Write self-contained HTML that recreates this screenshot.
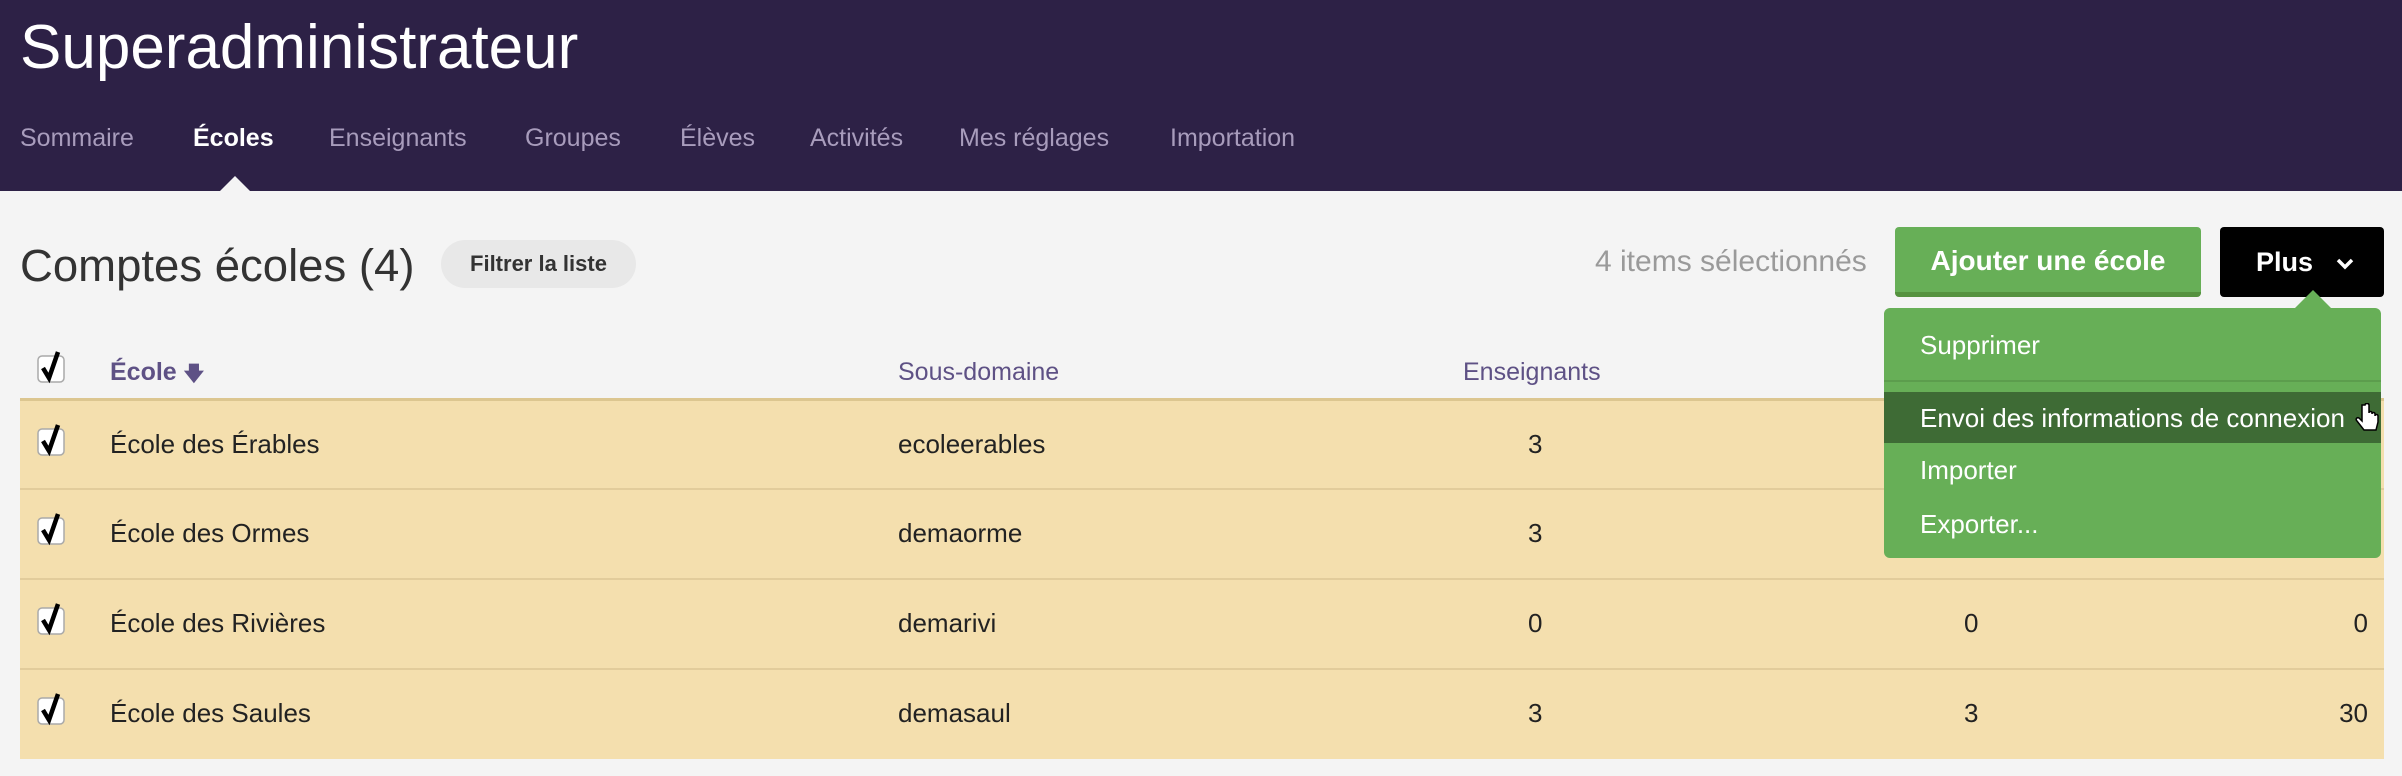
<!DOCTYPE html>
<html><head><meta charset="utf-8"><style>
*{margin:0;padding:0;box-sizing:border-box}
body{width:2402px;height:776px;background:#f4f4f4;font-family:"Liberation Sans",Arial,sans-serif;position:relative;overflow:hidden;color:#222}
.hdr{position:absolute;left:0;top:0;width:2402px;height:191px;background:#2d2146}
.title{position:absolute;left:20px;top:12px;font-size:62px;color:#fff;line-height:72px}
.nav{position:absolute;top:121px;font-size:25px;color:#a89cbc;line-height:34px}
.nav.on{color:#fff;font-weight:bold}
.tri{position:absolute;left:220px;top:176px;width:0;height:0;border-left:15px solid transparent;border-right:15px solid transparent;border-bottom:15px solid #f4f4f4}
.h1{position:absolute;left:20px;top:239px;font-size:45.5px;color:#333;line-height:54px}
.pill{position:absolute;left:441px;top:240px;width:195px;height:48px;border-radius:24px;background:#e8e8e8;font-weight:bold;font-size:22px;line-height:48px;text-align:center;color:#333}
.sel{position:absolute;left:1595px;top:244px;font-size:30px;color:#9a9a9a;line-height:36px}
.gb{position:absolute;left:1895px;top:227px;width:306px;height:70px;background:#67af57;border-bottom:5px solid #55923f;border-radius:4px;color:#fff;font-weight:bold;font-size:28px;text-align:center;line-height:68px}
.pb{position:absolute;left:2220px;top:227px;width:164px;height:70px;background:#000;border-radius:4px;color:#fff;font-weight:bold;font-size:27px;line-height:70px;padding-left:36px}
.dd{position:absolute;left:1884px;top:308px;width:497px;height:250px;background:#67af57;border-radius:6px}
.ddtri{position:absolute;left:2295px;top:290px;border-left:18px solid transparent;border-right:18px solid transparent;border-bottom:18px solid #67af57;width:0;height:0}
.di{position:absolute;left:36px;font-size:26px;color:#fff;line-height:34px;white-space:nowrap}
.th{position:absolute;top:356px;font-size:25px;color:#5e5185;line-height:32px}
.row{position:absolute;left:20px;width:2364px;height:90px;background:#f4dfae;border-top:2px solid #e2cc9b}
.c{position:absolute;font-size:26px;line-height:34px;top:26px;color:#222}
.cb{position:absolute;left:16px;width:34px;height:34px}
</style></head><body>
<div class="hdr">
<div class="title">Superadministrateur</div>
<div class="nav" style="left:20px">Sommaire</div>
<div class="nav on" style="left:193px">Écoles</div>
<div class="nav" style="left:329px">Enseignants</div>
<div class="nav" style="left:525px">Groupes</div>
<div class="nav" style="left:680px">Élèves</div>
<div class="nav" style="left:810px">Activités</div>
<div class="nav" style="left:959px">Mes réglages</div>
<div class="nav" style="left:1170px">Importation</div>
<div class="tri"></div>
</div>
<div class="h1">Comptes écoles (4)</div>
<div class="pill">Filtrer la liste</div>
<div class="sel">4 items sélectionnés</div>
<div class="gb">Ajouter une école</div>
<div class="pb">Plus <svg width="20" height="14" viewBox="0 0 20 14" style="margin-left:14px;vertical-align:middle"><path d="M3 3l7 7 7-7" stroke="#fff" stroke-width="3.5" fill="none"/></svg></div>

<svg class="cb" style="position:absolute;left:36px;top:350px" viewBox="0 0 34 34"><rect x="2" y="6" width="26" height="26" rx="4" fill="#fff" stroke="#aaa" stroke-width="1.5"/><path d="M7 18l6 10 9-26" stroke="#000" stroke-width="4.5" fill="none"/></svg>
<div class="th" style="left:110px;font-weight:bold">École <span style="font-size:20px">&#129095;</span></div>
<div class="th" style="left:898px">Sous-domaine</div>
<div class="th" style="left:1463px">Enseignants</div>

<div class="row" style="top:398px;border-top:3px solid #dcc690">
<svg class="cb" style="top:22px" viewBox="0 0 34 34"><rect x="2" y="6" width="26" height="26" rx="4" fill="#fff" stroke="#aaa" stroke-width="1.5"/><path d="M7 18l6 10 9-26" stroke="#000" stroke-width="4.5" fill="none"/></svg>
<div class="c" style="left:90px">École des Érables</div><div class="c" style="left:878px">ecoleerables</div><div class="c" style="left:1508px">3</div></div>
<div class="row" style="top:488px">
<svg class="cb" style="top:22px" viewBox="0 0 34 34"><rect x="2" y="6" width="26" height="26" rx="4" fill="#fff" stroke="#aaa" stroke-width="1.5"/><path d="M7 18l6 10 9-26" stroke="#000" stroke-width="4.5" fill="none"/></svg>
<div class="c" style="left:90px">École des Ormes</div><div class="c" style="left:878px">demaorme</div><div class="c" style="left:1508px">3</div></div>
<div class="row" style="top:578px">
<svg class="cb" style="top:22px" viewBox="0 0 34 34"><rect x="2" y="6" width="26" height="26" rx="4" fill="#fff" stroke="#aaa" stroke-width="1.5"/><path d="M7 18l6 10 9-26" stroke="#000" stroke-width="4.5" fill="none"/></svg>
<div class="c" style="left:90px">École des Rivières</div><div class="c" style="left:878px">demarivi</div><div class="c" style="left:1508px">0</div><div class="c" style="left:1944px">0</div><div class="c" style="right:16px">0</div></div>
<div class="row" style="top:668px;height:91px">
<svg class="cb" style="top:22px" viewBox="0 0 34 34"><rect x="2" y="6" width="26" height="26" rx="4" fill="#fff" stroke="#aaa" stroke-width="1.5"/><path d="M7 18l6 10 9-26" stroke="#000" stroke-width="4.5" fill="none"/></svg>
<div class="c" style="left:90px">École des Saules</div><div class="c" style="left:878px">demasaul</div><div class="c" style="left:1508px">3</div><div class="c" style="left:1944px">3</div><div class="c" style="right:16px">30</div></div>

<div class="ddtri"></div>
<div class="dd">
<div class="di" style="top:20px">Supprimer</div>
<div style="position:absolute;left:0;top:72px;width:497px;height:2px;background:#5c9d4d"></div>
<div style="position:absolute;left:0;top:84px;width:497px;height:51px;background:#3e6b35"></div>
<div class="di" style="top:93px">Envoi des informations de connexion</div>
<div class="di" style="top:145px">Importer</div>
<div class="di" style="top:199px">Exporter...</div>
<svg style="position:absolute;left:470px;top:95px" width="26" height="34" viewBox="0 0 26 34"><path d="M8 2v16l-3-3c-2-1-4 1-2 3l7 9h12l2-8v-6c0-2-3-2-3 0v-2c0-2-3-2-3 0v-1c0-2-3-2-3 0V2c0-2-4-2-4 0z" fill="#fff" stroke="#000" stroke-width="1.5"/></svg>
</div>
</body></html>
